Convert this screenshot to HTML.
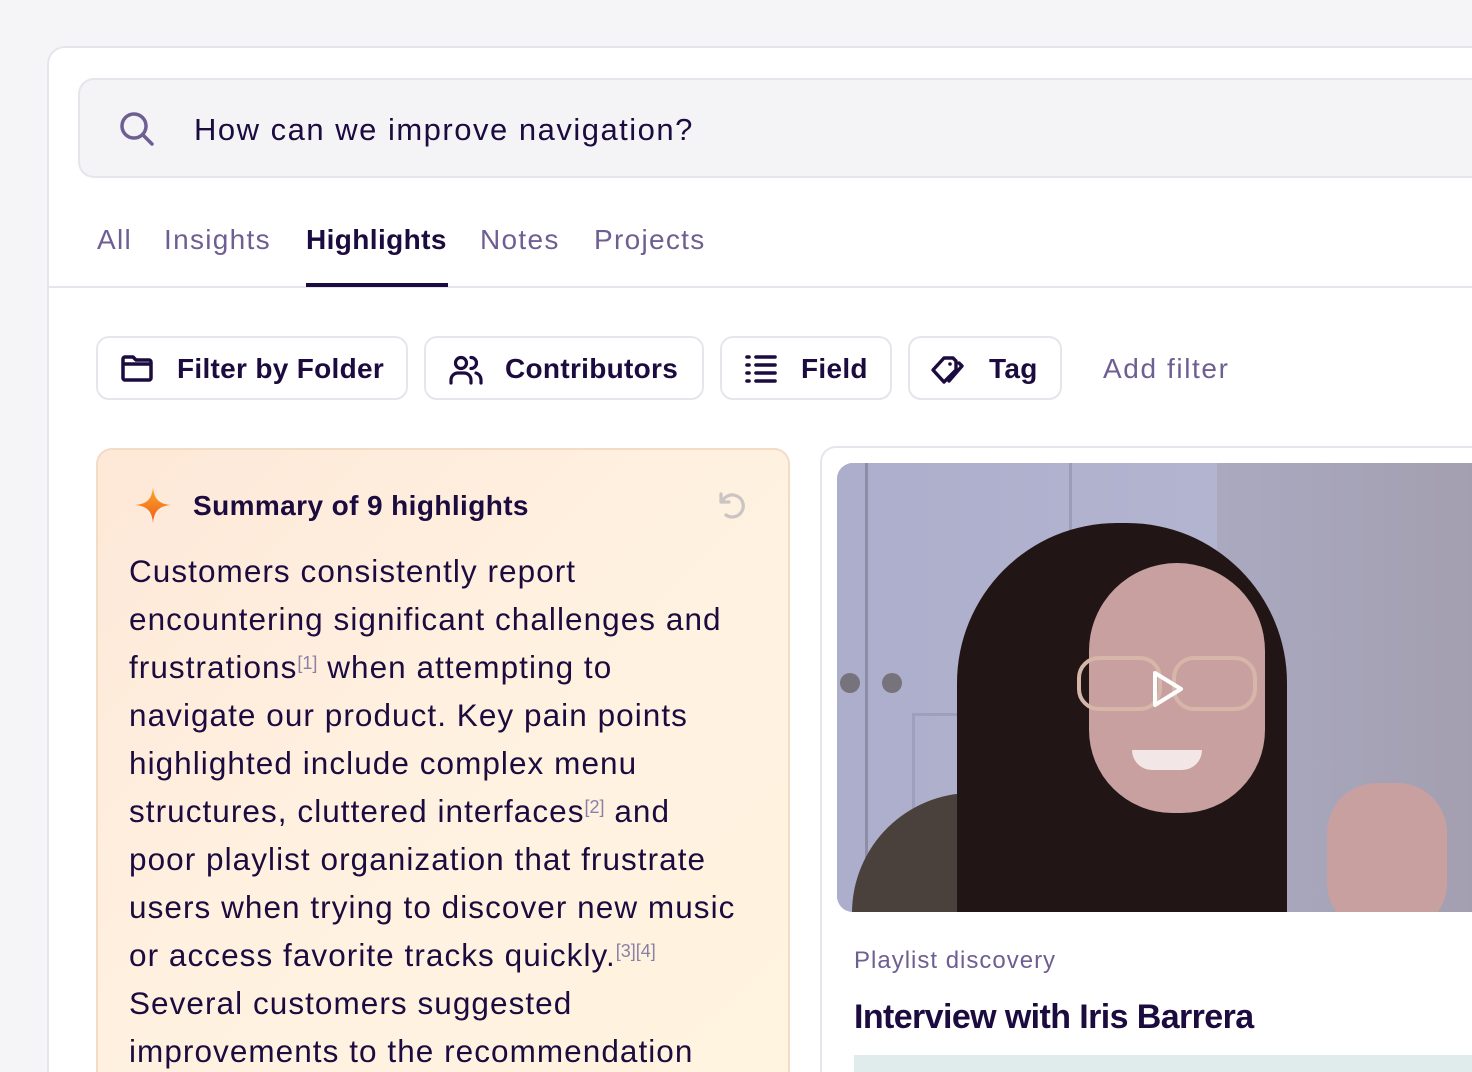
<!DOCTYPE html>
<html style="overflow:hidden"><head><meta charset="utf-8"><style>
*{box-sizing:border-box;margin:0;padding:0}
html,body{width:1472px;height:1072px;overflow:hidden}
body{background:#f5f5f7;font-family:"Liberation Sans",sans-serif;color:#1c0b3f;position:relative}
.panel{position:absolute;left:47px;top:46px;width:1425px;height:1026px;background:#fff;border:2px solid #e6e5ec;border-right:none;border-bottom:none;border-radius:18px 0 0 0}
.search{position:absolute;left:78px;top:78px;width:1394px;height:100px;background:#f4f4f6;border:2px solid #e6e5ec;border-right:none;border-radius:16px 0 0 16px}
.search span{position:absolute;left:114px;top:32px;font-size:31px;letter-spacing:1.5px;color:#1c0b3f}
.tabs{position:absolute;top:224px;left:97px;font-size:28px;color:#6e5f92;letter-spacing:1.3px}
.tabs span{position:absolute;white-space:nowrap}
.divider{position:absolute;left:48px;top:286px;width:1424px;height:2px;background:#e6e5ec}
.ul{position:absolute;left:306px;top:283px;width:142px;height:4px;background:#1c0b3f}
.btn{position:absolute;top:336px;height:64px;border:2px solid #e6e5ec;border-radius:13px;background:#fff;font-size:28px;font-weight:bold;line-height:62px;letter-spacing:0.3px}
.btn svg{position:absolute;top:16px}
.btn span{position:absolute;white-space:nowrap}
.sum{position:absolute;left:96px;top:448px;width:694px;height:624px;overflow:hidden;border:2px solid #f3dcc6;border-bottom:none;border-radius:16px 16px 0 0;background:linear-gradient(135deg,#fee8d8 0%,#fff1e0 50%,#fff4e0 100%)}
.sum h3{position:absolute;left:95px;top:40px;font-size:28px;white-space:nowrap;letter-spacing:0.4px}
.sum p{position:absolute;left:31px;top:97px;width:640px;font-size:31.5px;line-height:48px;color:#1c0b3f;white-space:nowrap;letter-spacing:1.05px}
sup{font-size:18px;color:#8a80a6;vertical-align:top;position:relative;top:-4px;letter-spacing:0}
.card{position:absolute;left:820px;top:446px;width:652px;height:626px;border:2px solid #e6e5ec;border-right:none;border-bottom:none;border-radius:16px 0 0 0;background:#fff}
.vid{position:absolute;left:837px;top:463px;width:635px;height:449px;border-radius:16px 0 0 16px;overflow:hidden;background:#a6a5bb}
.vid div{position:absolute}
</style></head><body>
<div class="panel"></div>
<div class="search">
<svg style="position:absolute;left:38px;top:30px" width="38" height="38" viewBox="0 0 38 38"><circle cx="16" cy="16" r="12" fill="none" stroke="#6e5f92" stroke-width="3.5"/><line x1="25" y1="25" x2="34" y2="34" stroke="#6e5f92" stroke-width="3.5" stroke-linecap="round"/></svg>
<span>How can we improve navigation?</span></div>
<div class="tabs"><span style="left:0">All</span><span style="left:67px">Insights</span><span style="left:209px;color:#1c0b3f;font-weight:bold;letter-spacing:0.4px">Highlights</span><span style="left:383px">Notes</span><span style="left:497px">Projects</span></div>
<div class="divider"></div><div class="ul"></div>

<div class="btn" style="left:96px;width:312px"><svg style="left:22px" width="34" height="30" viewBox="0 0 34 30"><path d="M3 5a2 2 0 0 1 2-2h8l3 3h13a2 2 0 0 1 2 2v16a2 2 0 0 1-2 2H5a2 2 0 0 1-2-2z M3 10h28" fill="none" stroke="#1c0b3f" stroke-width="3.5" stroke-linejoin="round"/></svg><span style="left:79px">Filter by Folder</span></div>
<div class="btn" style="left:424px;width:280px"><svg style="left:22px" width="36" height="32" viewBox="0 0 36 32"><circle cx="13" cy="9" r="5.5" fill="none" stroke="#1c0b3f" stroke-width="3.2"/><path d="M3 29v-3a7 7 0 0 1 7-7h6a7 7 0 0 1 7 7v3M23 3.5a5.5 5.5 0 0 1 0 11M28 19a7 7 0 0 1 5 7v3" fill="none" stroke="#1c0b3f" stroke-width="3.2" stroke-linecap="round"/></svg><span style="left:79px">Contributors</span></div>
<div class="btn" style="left:720px;width:172px"><svg style="left:22px" width="34" height="30" viewBox="0 0 34 30"><g stroke="#1c0b3f" stroke-width="3.6" stroke-linecap="round"><path d="M3 3h2M12 3h19M3 11h2M12 11h19M3 19h2M12 19h19M3 27h2M12 27h19"/></g></svg><span style="left:79px">Field</span></div>
<div class="btn" style="left:908px;width:154px"><svg style="left:20px" width="38" height="32" viewBox="0 0 38 32"><path d="M3 16 14 4h9l3 3v9L14 28z M29 9l3 3-13 15" fill="none" stroke="#1c0b3f" stroke-width="3.4" stroke-linejoin="round" stroke-linecap="round"/><circle cx="20" cy="10" r="1.8" fill="#1c0b3f"/></svg><span style="left:79px">Tag</span></div>
<div style="position:absolute;left:1103px;top:353px;font-size:28px;color:#6e5f92;letter-spacing:1.6px">Add filter</div>

<div class="sum">
<svg style="position:absolute;left:36px;top:36px" width="38" height="38" viewBox="0 0 38 38"><defs><linearGradient id="g" x1="0" y1="0" x2="0" y2="1"><stop offset="0" stop-color="#fba92a"/><stop offset="1" stop-color="#ef5b1b"/></linearGradient></defs><path d="M19 1C20 12 24 18 37 19 24 20 20 26 19 37 18 26 14 20 1 19 14 18 18 12 19 1z" fill="url(#g)"/></svg>
<h3>Summary of 9 highlights</h3>
<svg style="position:absolute;left:618px;top:38px" width="34" height="34" viewBox="0 0 34 34"><path d="M5 6v8h8M6 14a11 11 0 1 1 4 13" fill="none" stroke="#cbc3c4" stroke-width="3.2" stroke-linecap="round" stroke-linejoin="round"/></svg>
<p>Customers consistently report<br>encountering significant challenges and<br>frustrations<sup>[1]</sup> when attempting to<br>navigate our product. Key pain points<br>highlighted include complex menu<br>structures, cluttered interfaces<sup>[2]</sup> and<br>poor playlist organization that frustrate<br>users when trying to discover new music<br>or access favorite tracks quickly.<sup>[3][4]</sup><br>Several customers suggested<br>improvements to the recommendation</p>
</div>

<div class="card"></div>
<div class="vid">
<div style="left:0;top:0;width:380px;height:449px;background:linear-gradient(90deg,#acaecb,#b3b4d0)"></div>
<div style="left:380px;top:0;width:260px;height:449px;background:linear-gradient(90deg,#aaa9c0,#a39fb0)"></div>
<div style="left:28px;top:0;width:3px;height:449px;background:#8d8da8"></div>
<div style="left:232px;top:0;width:3px;height:449px;background:#9c9cb6"></div>
<div style="left:75px;top:250px;width:120px;height:200px;border:3px solid #9e9fbc"></div>
<div style="left:3px;top:210px;width:20px;height:20px;border-radius:50%;background:#77737c"></div>
<div style="left:45px;top:210px;width:20px;height:20px;border-radius:50%;background:#77737c"></div>
<div style="left:15px;top:330px;width:300px;height:160px;border-radius:120px 120px 0 0;background:#4a403c"></div>
<div style="left:120px;top:60px;width:330px;height:420px;border-radius:160px 160px 30px 30px;background:#221515"></div>
<div style="left:252px;top:100px;width:176px;height:250px;border-radius:90px 90px 85px 85px;background:#c9a0a0"></div>
<div style="left:240px;top:193px;width:85px;height:55px;border:4px solid #d6b6a8;border-radius:22px"></div>
<div style="left:335px;top:193px;width:85px;height:55px;border:4px solid #d6b6a8;border-radius:22px"></div>
<div style="left:295px;top:287px;width:70px;height:20px;border-radius:0 0 35px 35px;background:#f2e6e6"></div>
<div style="left:490px;top:320px;width:120px;height:150px;border-radius:50px;background:#c9a0a0"></div>
<svg style="position:absolute;left:312px;top:206px" width="36" height="40" viewBox="0 0 36 40"><path d="M6 4 32 20 6 36z" fill="none" stroke="#fff" stroke-width="4" stroke-linejoin="round"/></svg>
</div>
<div style="position:absolute;left:854px;top:947px;font-size:24px;color:#6e5f92;letter-spacing:1px">Playlist discovery</div>
<div style="position:absolute;left:854px;top:998px;font-size:34px;font-weight:bold;letter-spacing:-0.6px;color:#1c0b3f">Interview with Iris Barrera</div>
<div style="position:absolute;left:854px;top:1055px;width:618px;height:17px;background:#dfeceb"></div>
</body></html>
